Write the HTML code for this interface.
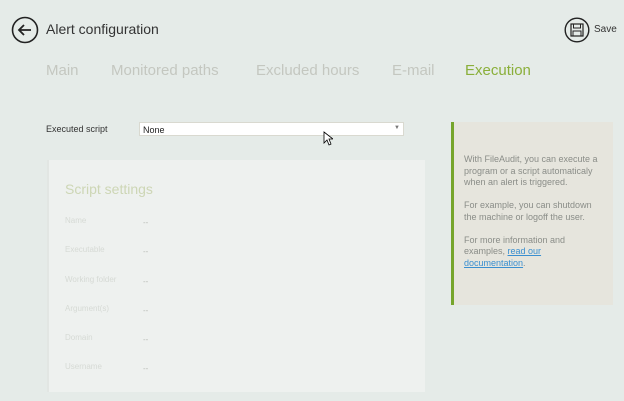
<!DOCTYPE html>
<html><head><meta charset="utf-8"><style>
body{margin:0;width:624px;height:401px;background:#e5ebe8;font-family:"Liberation Sans",sans-serif;position:relative;overflow:hidden}
.a{position:absolute;white-space:nowrap}
.tab{font-size:15px;color:#c4c7c0;top:62px}
.lbl{font-size:8px;color:#d6dad5;left:65px}
.val{font-size:8px;color:#b8bcb6;left:143px}
</style></head><body>
<svg class="a" style="left:11px;top:16px" width="28" height="28"><circle cx="14" cy="14" r="12.5" fill="none" stroke="#222" stroke-width="1.6"/><path d="M20 14H8M13 9L8 14L13 19" fill="none" stroke="#222" stroke-width="1.8"/></svg>
<div class="a" style="left:46px;top:21px;font-size:14px;color:#333">Alert configuration</div>
<svg class="a" style="left:564px;top:17px" width="26" height="26"><circle cx="13" cy="13" r="11.8" fill="none" stroke="#222" stroke-width="1.4"/><rect x="7" y="7" width="12" height="12" fill="none" stroke="#222" stroke-width="1.2"/><rect x="9.5" y="7" width="7" height="4" fill="none" stroke="#222" stroke-width="1"/><rect x="9" y="14" width="8" height="5" fill="none" stroke="#222" stroke-width="1"/></svg>
<div class="a" style="left:594px;top:24px;font-size:10px;color:#333">Save</div>
<div class="a tab" style="left:46px">Main</div>
<div class="a tab" style="left:111px">Monitored paths</div>
<div class="a tab" style="left:256px">Excluded hours</div>
<div class="a tab" style="left:392px">E-mail</div>
<div class="a tab" style="left:465px;color:#8aaf3a">Execution</div>
<div class="a" style="left:46px;top:124px;font-size:9px;color:#333">Executed script</div>
<div class="a" style="left:139px;top:122px;width:265px;height:14px;background:#fff;border:1px solid #d9d9d0;box-sizing:border-box"><span class="a" style="left:3px;top:2px;font-size:9px;color:#222">None</span><span class="a" style="right:3px;top:2px;font-size:6px;color:#777">▼</span></div>
<svg class="a" style="left:323px;top:131px" width="10" height="15"><path d="M1 1V12L4 9L6 14L8 13L6 8L10 8Z" fill="#fff" stroke="#000" stroke-width="0.8"/></svg>
<div class="a" style="left:47px;top:160px;width:376px;height:232px;background:#eef1ef;border-left:2px solid #e2e6e3"></div>
<div class="a" style="left:65px;top:181px;font-size:14px;color:#cdd6b5">Script settings</div>
<div class="a lbl" style="top:216px">Name</div><div class="a val" style="top:218px">--</div>
<div class="a lbl" style="top:245px">Executable</div><div class="a val" style="top:247px">--</div>
<div class="a lbl" style="top:275px">Working folder</div><div class="a val" style="top:277px">--</div>
<div class="a lbl" style="top:304px">Argument(s)</div><div class="a val" style="top:306px">--</div>
<div class="a lbl" style="top:333px">Domain</div><div class="a val" style="top:335px">--</div>
<div class="a lbl" style="top:362px">Username</div><div class="a val" style="top:364px">--</div>
<div class="a" style="left:451px;top:122px;width:162px;height:183px;background:#e6e5dd;border-left:3px solid #76a52c;box-sizing:border-box"></div>
<div class="a" style="left:464px;top:154px;font-size:9px;line-height:11.5px;color:#8a8d88;white-space:normal;width:140px">With FileAudit, you can execute a program or a script automaticaly when an alert is triggered.<br><br>For example, you can shutdown the machine or logoff the user.<br><br>For more information and examples, <span style="color:#3a8fd0;text-decoration:underline">read our documentation</span>.</div>
</body></html>
